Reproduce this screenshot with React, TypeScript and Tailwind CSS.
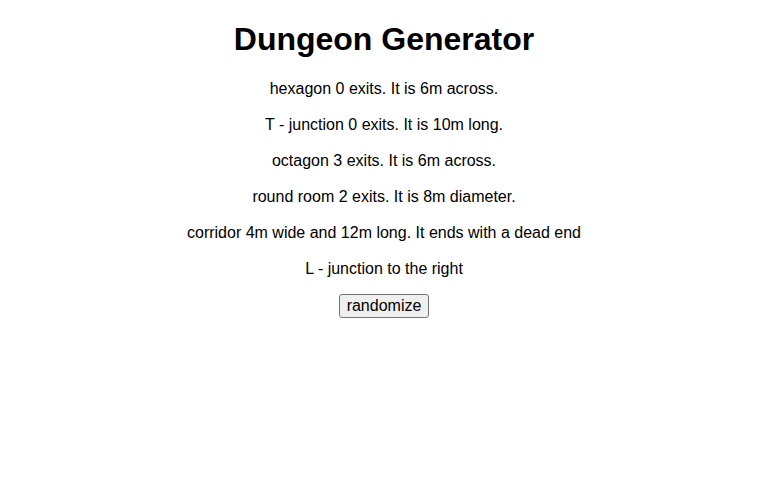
export default function App() {
  const lines = [
    "hexagon 0 exits. It is 6m across.",
    "T - junction 0 exits. It is 10m long.",
    "octagon 3 exits. It is 6m across.",
    "round room 2 exits. It is 8m diameter.",
    "corridor 4m wide and 12m long. It ends with a dead end",
    "L - junction to the right",
  ];
  return (
    <div
      className="min-h-[480px] bg-white text-center text-black"
      style={{ fontFamily: '"Liberation Sans", Arial, sans-serif' }}
    >
      <div className="flow-root">
        <h1 className="mt-[21px] mb-[21px] text-[32px] leading-[37px] font-bold">Dungeon Generator</h1>
        {lines.map((t) => (
          <p key={t} className="mb-4 text-base leading-5">
            {t}
          </p>
        ))}
        <button className="mx-auto -mt-px block rounded-[3px] border border-[#767676] bg-[#efefef] px-[7px] py-[1px] text-base leading-5 text-black">
          randomize
        </button>
      </div>
    </div>
  );
}
